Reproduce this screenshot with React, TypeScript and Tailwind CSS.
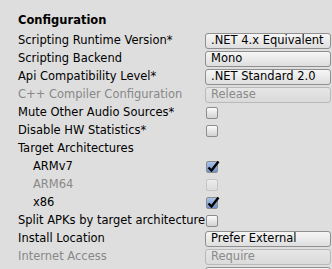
import React from 'react';

type Row =
  | { kind: 'select'; label: string; value: string; disabled?: boolean }
  | { kind: 'check'; label: string; checked?: boolean; disabled?: boolean; indent?: boolean }
  | { kind: 'label'; label: string };

const rows: Row[] = [
  { kind: 'select', label: 'Scripting Runtime Version*', value: '.NET 4.x Equivalent' },
  { kind: 'select', label: 'Scripting Backend', value: 'Mono' },
  { kind: 'select', label: 'Api Compatibility Level*', value: '.NET Standard 2.0' },
  { kind: 'select', label: 'C++ Compiler Configuration', value: 'Release', disabled: true },
  { kind: 'check', label: 'Mute Other Audio Sources*' },
  { kind: 'check', label: 'Disable HW Statistics*' },
  { kind: 'label', label: 'Target Architectures' },
  { kind: 'check', label: 'ARMv7', checked: true, indent: true },
  { kind: 'check', label: 'ARM64', disabled: true, indent: true },
  { kind: 'check', label: 'x86', checked: true, indent: true },
  { kind: 'check', label: 'Split APKs by target architecture' },
  { kind: 'select', label: 'Install Location', value: 'Prefer External' },
  { kind: 'select', label: 'Internet Access', value: 'Require', disabled: true },
  { kind: 'select', label: '', value: '' },
];

const Checkbox = ({ checked, disabled }: { checked?: boolean; disabled?: boolean }) => {
  if (disabled) {
    return <div className="w-[12px] h-[12px] rounded-[2px] border border-[#c4c4c4] bg-gradient-to-b from-[#ececec] to-[#dcdcdc]" />;
  }
  return (
    <div
      className={`relative w-[12px] h-[12px] rounded-[2px] border border-[#8c8c8c] bg-gradient-to-b ${
        checked ? 'from-[#a9c3ea] to-[#6f92c9]' : 'from-[#fbfbfb] to-[#d2d2d2]'
      }`}
    >
      {checked && (
        <svg className="absolute left-[-1px] top-[-3px]" width="14" height="14" viewBox="0 0 14 14">
          <path d="M2.5 8.5 L5.5 11.5 L12.5 2.5" fill="none" stroke="#000" strokeWidth="2.4" />
        </svg>
      )}
    </div>
  );
};

const Select = ({ value, disabled }: { value: string; disabled?: boolean }) => (
  <div
    className={`h-[16px] w-[126px] rounded-[3px] border pl-[5px] flex items-center leading-none bg-gradient-to-b ${
      disabled
        ? 'border-[#b9b9b9] from-[#e6e6e6] to-[#dadada] text-[#8a8a8a]'
        : 'border-[#8f8f8f] from-[#f6f6f6] to-[#dedede] text-black'
    }`}
  >
    {value}
  </div>
);

export default function App() {
  return (
    <div
      className="w-[332px] h-[269px] overflow-hidden bg-[#dedede] pt-[12px] pl-[18px] text-[11.5px]"
      style={{ fontFamily: '"DejaVu Sans", Verdana, sans-serif' }}
    >
      <div className="h-[18px] flex items-center font-bold text-black">Configuration</div>
      <div className="mt-[2px]">
        {rows.map((r, i) => {
          const disabled = r.kind !== 'label' && r.disabled;
          return (
            <div key={i} className="h-[18px] flex items-center whitespace-nowrap">
              <div
                className={`w-[187px] shrink-0 ${r.kind === 'check' && r.indent ? 'pl-[15px]' : ''} ${
                  disabled ? 'text-[#888]' : 'text-black'
                }`}
              >
                {r.label}
              </div>
              {r.kind === 'select' && <Select value={r.value} disabled={r.disabled} />}
              {r.kind === 'check' && (
                <div className="ml-[1px]">
                  <Checkbox checked={r.checked} disabled={r.disabled} />
                </div>
              )}
            </div>
          );
        })}
      </div>
    </div>
  );
}
